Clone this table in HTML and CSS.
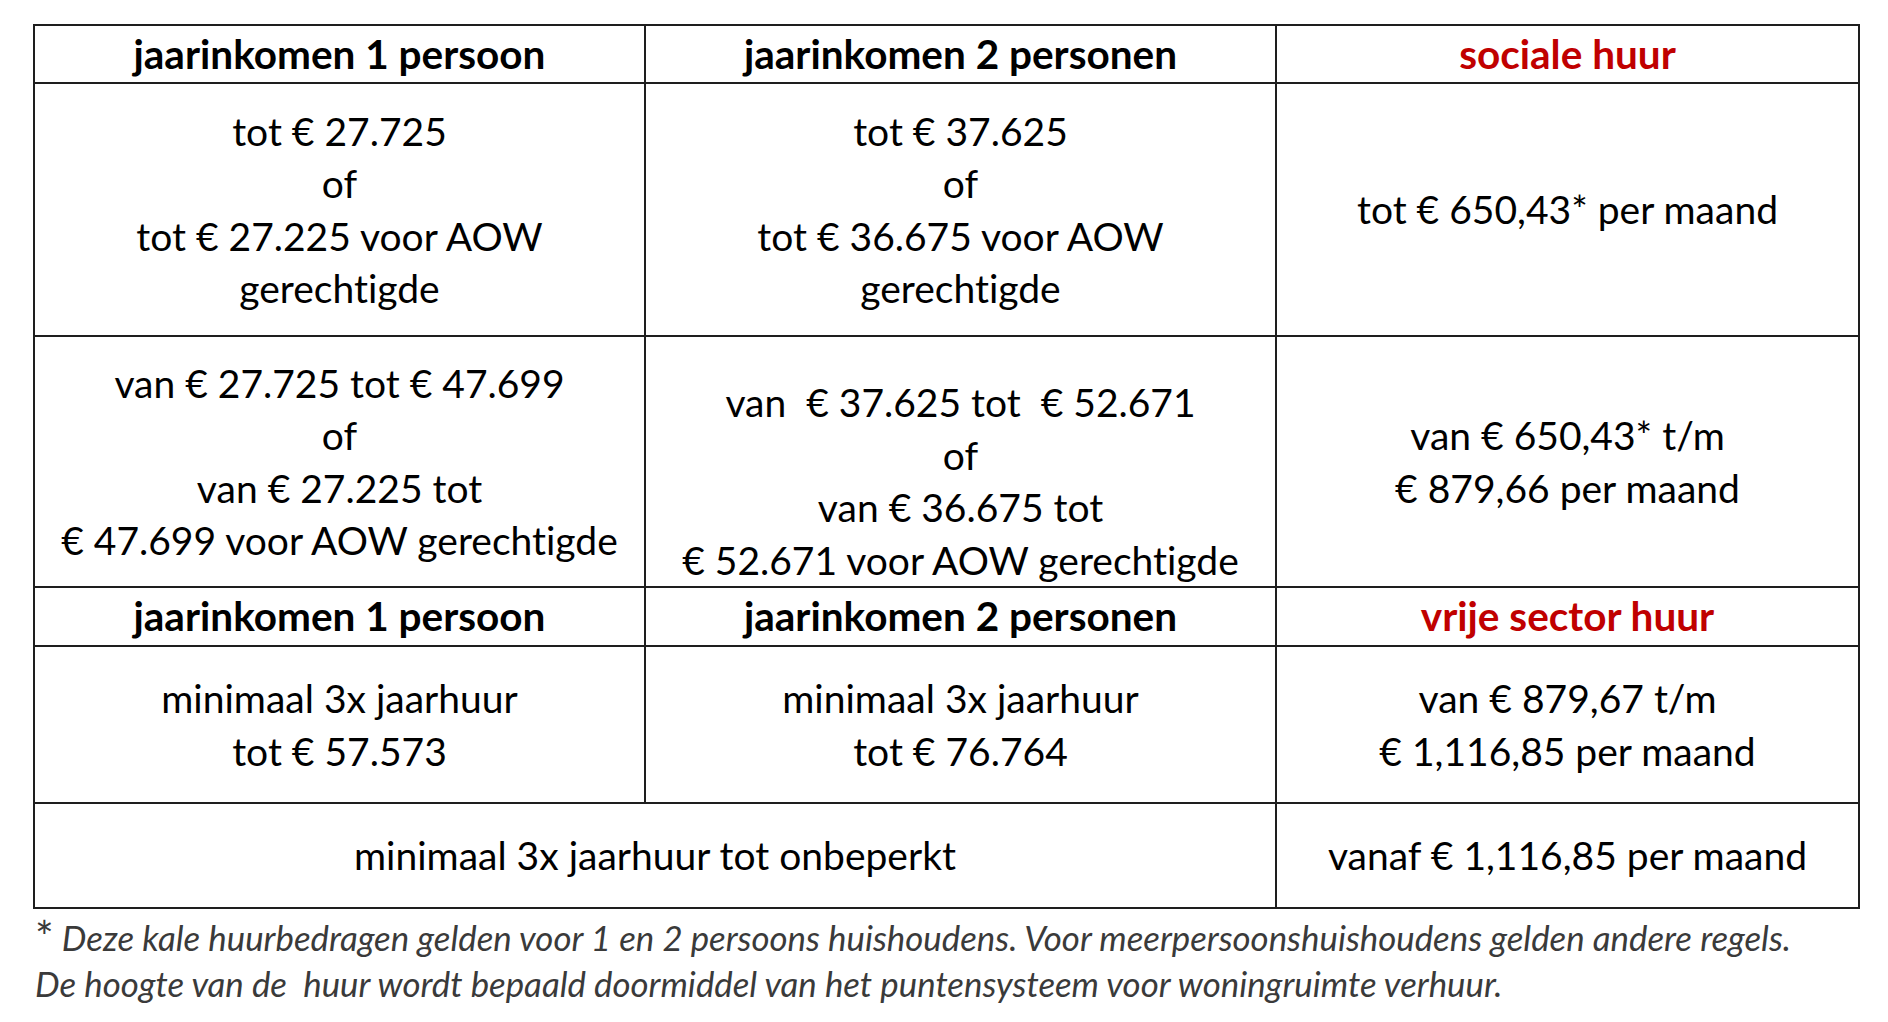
FILE: index.html
```html
<!DOCTYPE html>
<html lang="nl">
<head>
<meta charset="utf-8">
<title>Huurgrenzen</title>
<link rel="stylesheet" href="styles.css">
</head>
<body>
<div class="page">
  <table class="rent-table">
    <colgroup>
      <col class="c1">
      <col class="c2">
      <col class="c3">
    </colgroup>
    <tbody>
      <tr class="row-head">
        <th>jaarinkomen 1 persoon</th>
        <th>jaarinkomen 2 personen</th>
        <th class="red">sociale huur</th>
      </tr>
      <tr class="row-1">
        <td>tot € 27.725<br>of<br>tot € 27.225 voor AOW<br>gerechtigde</td>
        <td>tot € 37.625<br>of<br>tot € 36.675 voor AOW<br>gerechtigde</td>
        <td>tot € 650,43* per maand</td>
      </tr>
      <tr class="row-2">
        <td>van € 27.725 tot € 47.699<br>of<br>van € 27.225 tot<br>€ 47.699 voor AOW gerechtigde</td>
        <td class="bottom">van &nbsp;€ 37.625 tot &nbsp;€ 52.671<br>of<br>van € 36.675 tot<br>€ 52.671 voor AOW gerechtigde</td>
        <td>van € 650,43* t/m<br>€ 879,66 per maand</td>
      </tr>
      <tr class="row-head2">
        <th>jaarinkomen 1 persoon</th>
        <th>jaarinkomen 2 personen</th>
        <th class="red">vrije sector huur</th>
      </tr>
      <tr class="row-3">
        <td>minimaal 3x jaarhuur<br>tot € 57.573</td>
        <td>minimaal 3x jaarhuur<br>tot € 76.764</td>
        <td>van € 879,67 t/m<br>€ 1,116,85 per maand</td>
      </tr>
      <tr class="row-4">
        <td colspan="2">minimaal 3x jaarhuur tot onbeperkt</td>
        <td>vanaf € 1,116,85 per maand</td>
      </tr>
    </tbody>
  </table>
  <p class="note"><span class="star">*</span> Deze kale huurbedragen gelden voor 1 en 2 persoons huishoudens. Voor meerpersoonshuishoudens gelden andere regels.<br>De hoogte van de &nbsp;huur wordt bepaald doormiddel van het puntensysteem voor woningruimte verhuur.</p>
</div>
</body>
</html>
```

FILE: styles.css
```css
html, body {
  margin: 0;
  padding: 0;
  background: #ffffff;
}

.page {
  padding: 24px 0 0 33px;
  font-family: "Lato", "Liberation Sans", sans-serif;
  font-variant-ligatures: none;
  color: #000000;
}

.rent-table {
  border-collapse: collapse;
  table-layout: fixed;
  width: 1825px;
}

.c1 { width: 611px; }
.c2 { width: 631px; }
.c3 { width: 583px; }

.rent-table th,
.rent-table td {
  border: 2px solid #1e1e1e;
  text-align: center;
  vertical-align: middle;
  padding: 0 4px;
  font-size: 39px;
  line-height: 52.5px;
  font-weight: 400;
}

.rent-table th {
  font-weight: 700;
  font-size: 40.5px;
}

.rent-table th.red {
  color: #c00000;
}

.row-head th { height: 56px; }
.row-1 td { height: 251px; }
.row-2 td { height: 249px; }
.row-head2 th { height: 57px; }
.row-3 td { height: 155px; }
.row-4 td { height: 103px; }

.rent-table td.bottom {
  vertical-align: bottom;
}

.note {
  margin: 6px 0 0 2px;
  font-size: 34.8px;
  line-height: 46px;
  font-style: italic;
  color: #3a3a3a;
}

.star {
  font-style: normal;
  font-size: 44px;
  position: relative;
  top: 2px;
  line-height: 0;
}
```
